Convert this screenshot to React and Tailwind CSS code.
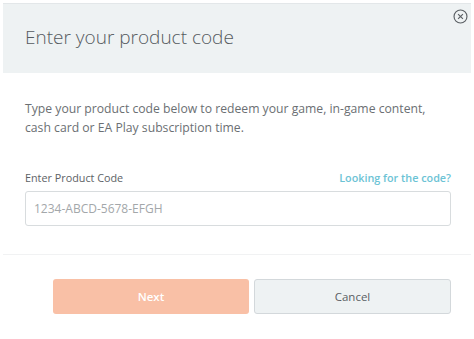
export default function App() {
  return (
    <div className="w-[474px] h-[339px] bg-white overflow-hidden pt-[3px] px-[3px]" style={{ fontFamily: '"Open Sans", sans-serif' }}>
      {/* Header */}
      <div className="relative h-[70px] bg-[#eef2f3] border-t border-[#e3e7e9] flex items-center pl-[22px]">
        <h1 className="text-[19px] font-light text-[#555a5e] leading-none pb-[2px]">Enter your product code</h1>
        <button className="absolute right-[3px] top-[5px] w-[15px] h-[15px] text-[#5a5f63]">
          <svg viewBox="0 0 16 16" className="w-full h-full" fill="none" stroke="currentColor" strokeWidth="1.2">
            <circle cx="8" cy="8" r="6.9" />
            <path d="M5.4 5.4l5.2 5.2M10.6 5.4l-5.2 5.2" />
          </svg>
        </button>
      </div>

      {/* Body */}
      <div className="px-[22px] pt-[26px]">
        <p className="text-[12.2px] leading-[19px] text-[#6b6f73] w-[410px]">
          Type your product code below to redeem your game, in-game content, cash card or EA Play subscription time.
        </p>
        <div className="mt-[33px] w-[426px] flex items-center justify-between">
          <span className="text-[10.8px] text-[#5d6266]">Enter Product Code</span>
          <a className="text-[10.8px] font-semibold text-[#6cc3d5]">Looking for the code?</a>
        </div>
        <div className="mt-[5px] w-[426px] h-[35px] border border-[#d8dcde] rounded-[3px] flex items-center pl-[8px]">
          <span className="text-[12px] text-[#a3a7aa]">1234-ABCD-5678-EFGH</span>
        </div>
      </div>

      {/* Divider */}
      <div className="mt-[28px] border-t border-[#f1f2f3]" />

      {/* Footer */}
      <div className="flex gap-[5px] pl-[50px] pt-[24px]">
        <button className="w-[196px] h-[35px] rounded-[3px] bg-[#f9c0a6] text-white text-[11.5px] font-semibold">Next</button>
        <button className="w-[197px] h-[35px] rounded-[3px] bg-[#eef2f3] border border-[#d3d8db] text-[#5a5f63] text-[11.5px]">Cancel</button>
      </div>
    </div>
  );
}
